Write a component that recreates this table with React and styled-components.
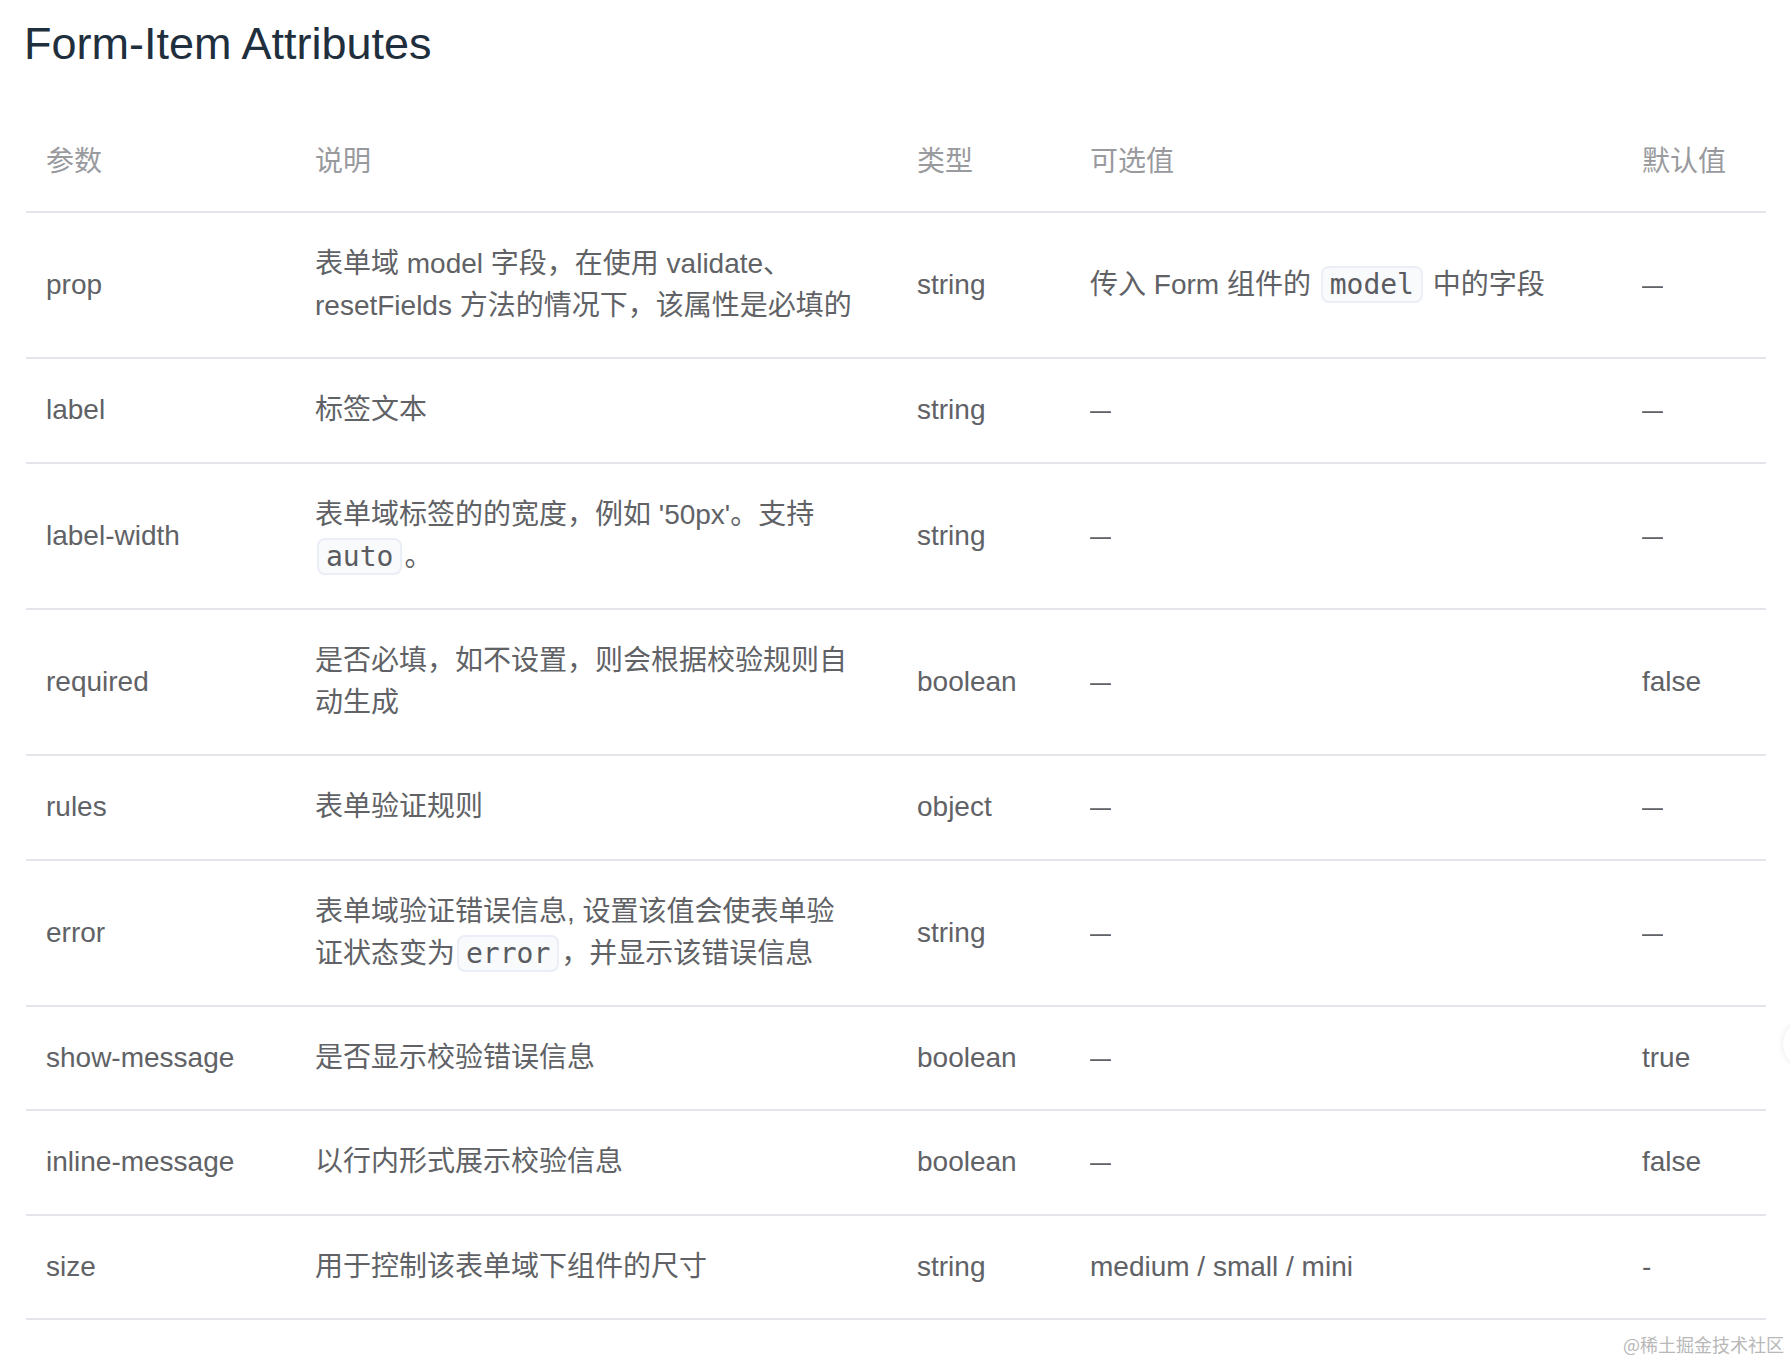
import styled, { createGlobalStyle } from "styled-components";

const GlobalStyle = createGlobalStyle`
  html, body {
    margin: 0;
    padding: 0;
    background: #fff;
  }
  body {
    font-family: "Liberation Sans", "Noto Sans CJK SC", sans-serif;
  }
`;

const Page = styled.div`
  width: 1790px;
  min-height: 1358px;
  box-sizing: border-box;
  padding: 21px 0 0 26px;
  overflow: hidden;
`;

const Title = styled.h3`
  margin: 0 0 42px -2px;
  font-size: 45px;
  line-height: 46px;
  font-weight: 400;
  color: #1f2f3d;
`;

const Table = styled.table`
  width: 1740px;
  border-collapse: collapse;
  table-layout: fixed;
  font-size: 28px;
  line-height: 42px;
  color: #606266;

  th,
  td {
    padding: 30px 30px 30.35px;
    text-align: left;
    vertical-align: middle;
    border-bottom: 2px solid #e3e5ea;
  }
  th:first-child,
  td:first-child {
    padding-left: 20px;
  }
  th {
    padding-top: 32px;
    padding-bottom: 28px;
    font-weight: 400;
    color: #999a9e;
  }
`;

const Desc = styled.div`
  max-width: 540px;
`;

const Code = styled.code`
  font-family: "DejaVu Sans Mono", "Liberation Mono", monospace;
  font-size: 28px;
  color: #5a5c61;
  background: #f9fafc;
  border: 2px solid #eaeef6;
  border-radius: 8px;
  padding: 0 7px;
  margin: 0 2px;
`;

const Dash = styled.span`
  display: inline-block;
  transform: scaleX(0.75);
  transform-origin: left center;
`;

const Watermark = styled.div`
  margin-top: 12px;
  padding-right: 6px;
  text-align: right;
  font-family: "Noto Sans CJK SC", sans-serif;
  font-size: 18px;
  line-height: 24px;
  font-weight: 400;
  color: #b8b8b8;
`;

const BackTop = styled.div`
  position: fixed;
  left: 1783px;
  top: 1020px;
  width: 48px;
  height: 48px;
  border-radius: 50%;
  background: #fff;
  box-shadow: 0 0 6px rgba(0, 0, 0, 0.1);
`;

const columns = [
  { title: "参数", width: 259 },
  { title: "说明", width: 602 },
  { title: "类型", width: 173 },
  { title: "可选值", width: 552 },
  { title: "默认值", width: 154 },
];

const dash = <Dash>—</Dash>;

const rows = [
  {
    name: "prop",
    desc: "表单域 model 字段，在使用 validate、resetFields 方法的情况下，该属性是必填的",
    type: "string",
    options: (
      <>
        传入 Form 组件的 <Code>model</Code> 中的字段
      </>
    ),
    def: dash,
  },
  { name: "label", desc: "标签文本", type: "string", options: dash, def: dash },
  {
    name: "label-width",
    desc: (
      <>
        表单域标签的的宽度，例如 '50px'。支持 <Code>auto</Code>。
      </>
    ),
    type: "string",
    options: dash,
    def: dash,
  },
  {
    name: "required",
    desc: "是否必填，如不设置，则会根据校验规则自动生成",
    type: "boolean",
    options: dash,
    def: "false",
  },
  { name: "rules", desc: "表单验证规则", type: "object", options: dash, def: dash },
  {
    name: "error",
    desc: (
      <>
        表单域验证错误信息, 设置该值会使表单验证状态变为<Code>error</Code>，并显示该错误信息
      </>
    ),
    type: "string",
    options: dash,
    def: dash,
  },
  {
    name: "show-message",
    desc: "是否显示校验错误信息",
    type: "boolean",
    options: dash,
    def: "true",
  },
  {
    name: "inline-message",
    desc: "以行内形式展示校验信息",
    type: "boolean",
    options: dash,
    def: "false",
  },
  {
    name: "size",
    desc: "用于控制该表单域下组件的尺寸",
    type: "string",
    options: "medium / small / mini",
    def: "-",
  },
];

export default function App() {
  return (
    <Page>
      <GlobalStyle />
      <Title>Form-Item Attributes</Title>
      <Table>
        <colgroup>
          {columns.map((c) => (
            <col key={c.title} style={{ width: c.width }} />
          ))}
        </colgroup>
        <thead>
          <tr>
            {columns.map((c) => (
              <th key={c.title}>{c.title}</th>
            ))}
          </tr>
        </thead>
        <tbody>
          {rows.map((r) => (
            <tr key={r.name}>
              <td>{r.name}</td>
              <td>
                <Desc>{r.desc}</Desc>
              </td>
              <td>{r.type}</td>
              <td>{r.options}</td>
              <td>{r.def}</td>
            </tr>
          ))}
        </tbody>
      </Table>
      <Watermark>@稀土掘金技术社区</Watermark>
      <BackTop />
    </Page>
  );
}
